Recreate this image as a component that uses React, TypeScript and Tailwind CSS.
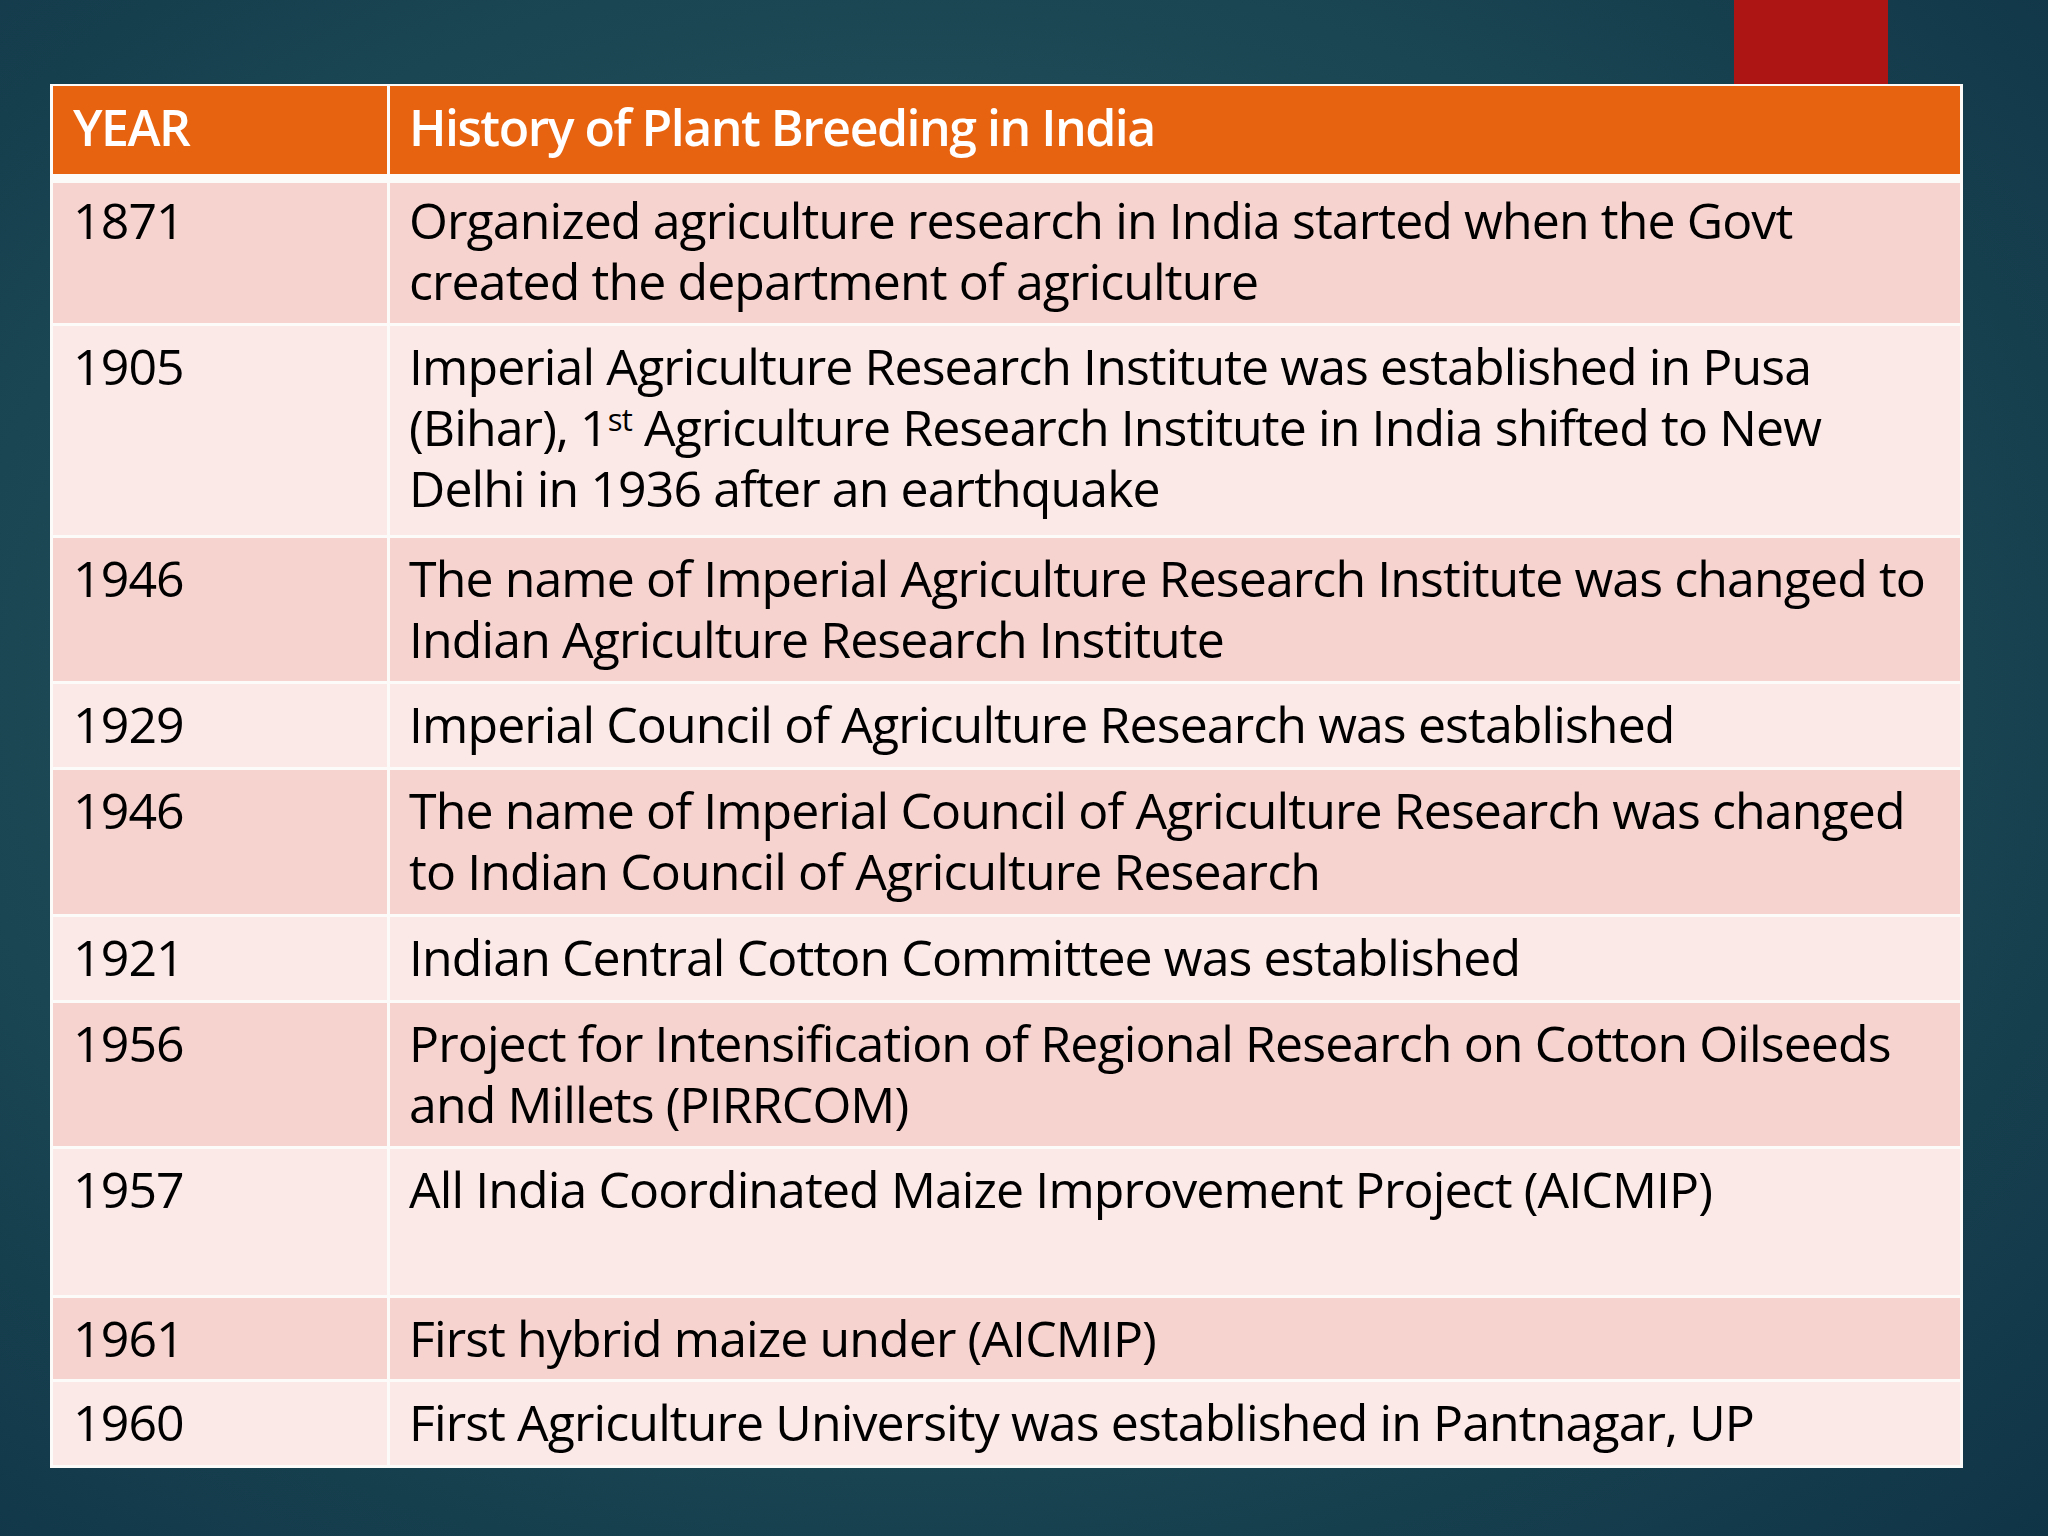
const rows: { year: string; lines: React.ReactNode[]; h: number }[] = [
  {
    year: "1871",
    lines: [
      "Organized agriculture research in India started when the Govt",
      "created the department of agriculture",
    ],
    h: 140,
  },
  {
    year: "1905",
    lines: [
      "Imperial Agriculture Research Institute was established in Pusa",
      <>
        (Bihar), 1<sup className="text-[31px]">st</sup> Agriculture Research Institute in India shifted to New
      </>,
      "Delhi in 1936 after an earthquake",
    ],
    h: 209,
  },
  {
    year: "1946",
    lines: [
      "The name of Imperial Agriculture Research Institute was changed to",
      "Indian Agriculture Research Institute",
    ],
    h: 143,
  },
  { year: "1929", lines: ["Imperial Council of Agriculture Research was established"], h: 83 },
  {
    year: "1946",
    lines: [
      "The name of Imperial Council of Agriculture Research was changed",
      "to Indian Council of Agriculture Research",
    ],
    h: 144,
  },
  { year: "1921", lines: ["Indian Central Cotton Committee was established"], h: 83 },
  {
    year: "1956",
    lines: [
      "Project for Intensification of Regional Research on Cotton Oilseeds",
      "and Millets (PIRRCOM)",
    ],
    h: 143,
  },
  { year: "1957", lines: ["All India Coordinated Maize Improvement Project (AICMIP)"], h: 146 },
  { year: "1961", lines: ["First hybrid maize under (AICMIP)"], h: 81 },
  { year: "1960", lines: ["First Agriculture University was established in Pantnagar, UP"], h: 83 },
];

export default function App() {
  return (
    <div
      className="w-[2048px] h-[1536px] overflow-hidden bg-[radial-gradient(ellipse_at_45%_45%,#2d5f65_0%,#1d4a56_50%,#0f3446_100%)] text-[50px] leading-[61px] tracking-[-0.018em] text-black"
      style={{ fontFamily: '"Open Sans", "Noto Sans", sans-serif' }}
    >
      {/* accent tab */}
      <div className="h-[84px] flex justify-end pr-[160px]">
        <div className="w-[154px] h-full bg-[#ad1515]" />
      </div>

      {/* table */}
      <div className="ml-[50px] w-[1913px] bg-[#fdfbfa] px-[3px] pt-[2px] pb-[3px] flex flex-col gap-[3px]">
        <div className="grid grid-cols-[334px_1fr] gap-[3px] mb-[6px] text-white font-semibold tracking-[-0.03em]">
          <div className="h-[88px] bg-[#e8630f] pl-[20px] pt-[11px]">YEAR</div>
          <div className="h-[88px] bg-[#e8630f] pl-[19px] pt-[11px]">History of Plant Breeding in India</div>
        </div>
        {rows.map((r, i) => (
          <div key={i} className="grid grid-cols-[334px_1fr] gap-[3px]">
            <div
              className={`pl-[20px] ${i === 0 ? "pt-[7px]" : "pt-[10px]"} ${i % 2 === 0 ? "bg-[#f7d3cf]" : "bg-[#fbe9e7]"}`}
              style={{ height: r.h }}
            >
              {r.year}
            </div>
            <div
              className={`pl-[19px] ${i === 0 ? "pt-[7px]" : "pt-[10px]"} whitespace-nowrap ${i % 2 === 0 ? "bg-[#f7d3cf]" : "bg-[#fbe9e7]"}`}
              style={{ height: r.h }}
            >
              {r.lines.map((l, j) => (
                <div key={j}>{l}</div>
              ))}
            </div>
          </div>
        ))}
      </div>
    </div>
  );
}
